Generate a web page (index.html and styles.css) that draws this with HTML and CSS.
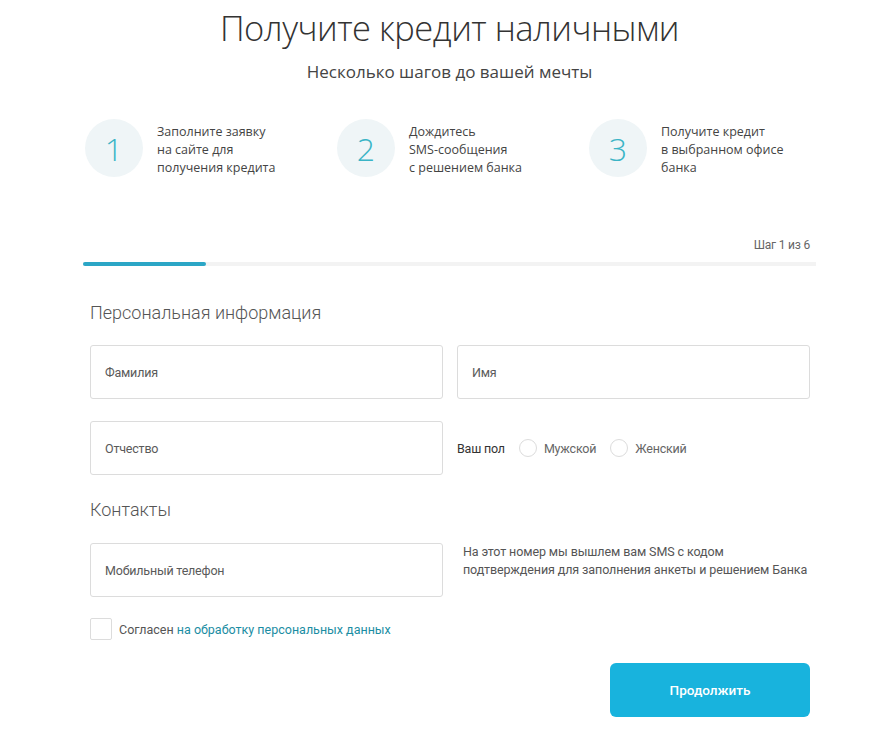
FILE: index.html
```html
<!DOCTYPE html>
<html lang="ru">
<head>
<meta charset="utf-8">
<title>Получите кредит наличными</title>
<link rel="stylesheet" href="styles.css">
</head>
<body>
<div class="page">
  <header class="hero">
    <h1 class="title">Получите кредит наличными</h1>
    <p class="subtitle">Несколько шагов до вашей мечты</p>
  </header>

  <div class="steps">
    <div class="step">
      <div class="step-num">1</div>
      <div class="step-text">Заполните заявку<br>на сайте для<br>получения кредита</div>
    </div>
    <div class="step">
      <div class="step-num">2</div>
      <div class="step-text">Дождитесь<br>SMS-сообщения<br>с решением банка</div>
    </div>
    <div class="step">
      <div class="step-num">3</div>
      <div class="step-text">Получите кредит<br>в выбранном офисе<br>банка</div>
    </div>
  </div>

  <div class="progress-wrap">
    <div class="progress-label">Шаг 1 из 6</div>
    <div class="progress-track"><div class="progress-fill"></div></div>
  </div>

  <form class="form">
    <h2 class="section-title">Персональная информация</h2>
    <div class="grid">
      <div class="field"><span class="ph">Фамилия</span></div>
      <div class="field"><span class="ph">Имя</span></div>
      <div class="field"><span class="ph">Отчество</span></div>
      <div class="gender">
        <span class="gender-label">Ваш пол</span>
        <span class="radio"></span><span class="radio-text">Мужской</span>
        <span class="radio"></span><span class="radio-text">Женский</span>
      </div>
    </div>

    <h2 class="section-title contacts">Контакты</h2>
    <div class="grid">
      <div class="field"><span class="ph">Мобильный телефон</span></div>
      <p class="note">На этот номер мы вышлем вам SMS с кодом<br>подтверждения для заполнения анкеты и решением Банка</p>
    </div>

    <div class="agree">
      <span class="checkbox"></span>
      <span class="agree-text">Согласен <a class="link" href="#">на обработку персональных данных</a></span>
    </div>

    <div class="actions">
      <button type="button" class="btn">Продолжить</button>
    </div>
  </form>
</div>
</body>
</html>
```

FILE: styles.css
```css
* { box-sizing: border-box; }

body {
  margin: 0;
  background: #ffffff;
  font-family: Roboto, "Liberation Sans", Arial, sans-serif;
  color: #444;
}

.page {
  width: 733px;
  margin-left: 83px;
}

.hero {
  text-align: center;
  padding-top: 6px;
}

.title {
  margin: 0;
  font-family: "Open Sans", "Noto Sans", sans-serif;
  font-weight: 300;
  font-size: 34.5px;
  line-height: 44px;
  color: #333;
  letter-spacing: -0.5px;
}

.subtitle {
  margin: 10px 0 0;
  font-family: "Open Sans", "Noto Sans", sans-serif;
  font-weight: 400;
  font-size: 17px;
  line-height: 24px;
  color: #444;
}

.steps {
  display: flex;
  margin-top: 35px;
  padding-left: 2px;
}

.step {
  flex: 0 0 252px;
  display: flex;
  align-items: center;
  gap: 14px;
}

.step-num {
  flex: 0 0 58px;
  width: 58px;
  height: 58px;
  border-radius: 50%;
  background: #eff5f7;
  display: flex;
  align-items: center;
  justify-content: center;
  font-family: "Open Sans", "Noto Sans", sans-serif;
  font-weight: 300;
  font-size: 32px;
  color: #3ab4c6;
}

.step-text {
  font-family: "Open Sans", "Noto Sans", sans-serif;
  font-size: 12.5px;
  line-height: 18px;
  color: #444;
  padding-top: 3px;
}

.progress-wrap {
  margin-top: 60px;
}

.progress-label {
  text-align: right;
  font-size: 12px;
  line-height: 16px;
  color: #666;
  padding-right: 6px;
  letter-spacing: -0.2px;
}

.progress-track {
  margin-top: 9px;
  height: 4px;
  background: #f3f3f3;
}

.progress-fill {
  width: 123px;
  height: 4px;
  background: #2ba6c6;
  border-radius: 2px;
}

.form {
  margin: 0;
  padding: 0 6px 0 7px;
}

.section-title {
  margin: 35px 0 20px;
  font-weight: 300;
  font-size: 18px;
  line-height: 24px;
  color: #555;
}

.section-title.contacts {
  margin-top: 23px;
  margin-bottom: 21px;
}

.grid {
  display: grid;
  grid-template-columns: 353px 353px;
  column-gap: 14px;
  row-gap: 22px;
}

.field {
  height: 54px;
  border: 1px solid #dcdcdc;
  border-radius: 3px;
  display: flex;
  align-items: center;
  padding-left: 14px;
}

.ph {
  font-size: 12.5px;
  color: #5a5a5a;
  letter-spacing: -0.2px;
}

.gender {
  display: flex;
  align-items: center;
  font-size: 12.5px;
  letter-spacing: -0.2px;
}

.gender-label {
  color: #333;
  margin-right: 14px;
}

.radio {
  width: 18px;
  height: 18px;
  border: 1px solid #dcdcdc;
  border-radius: 50%;
  margin-right: 7px;
}

.radio-text {
  color: #666;
  margin-right: 14px;
}

.note {
  margin: 0;
  padding: 0 0 0 6px;
  font-size: 12.5px;
  line-height: 18px;
  color: #555;
  letter-spacing: -0.1px;
  white-space: nowrap;
}

.agree {
  margin-top: 21px;
  display: flex;
  align-items: center;
  gap: 7px;
}

.checkbox {
  width: 22px;
  height: 22px;
  border: 1px solid #dcdcdc;
  border-radius: 2px;
}

.agree-text {
  font-size: 12.5px;
  color: #555;
}

.link {
  color: #1b8da3;
  text-decoration: none;
}

.actions {
  display: flex;
  justify-content: flex-end;
  margin-top: 23px;
}

.btn {
  width: 200px;
  height: 54px;
  border: 0;
  border-radius: 6px;
  background: #18b3dd;
  color: #fff;
  font-family: Roboto, "Liberation Sans", Arial, sans-serif;
  font-weight: 500;
  font-size: 13.5px;
}
```
